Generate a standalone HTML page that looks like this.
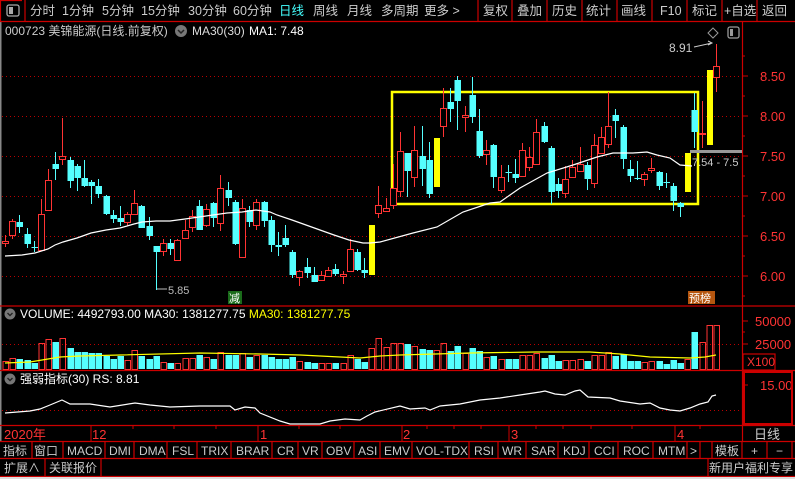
<!DOCTYPE html>
<html><head><meta charset="utf-8">
<style>
html,body{margin:0;padding:0;background:#000;width:795px;height:479px;overflow:hidden}
svg{display:block}
text{font-family:"Liberation Sans","Noto Sans CJK SC",sans-serif}
</style></head>
<body>
<svg id="s" width="795" height="479" viewBox="0 0 795 479" xmlns="http://www.w3.org/2000/svg">
<rect width="795" height="479" fill="#000"/>
<rect x="0" y="22" width="1.5" height="420" fill="#888"/>
<!-- toolbar -->
<g fill="#ccc" font-size="12.5">
<text x="30" y="15">分时</text><text x="62" y="15">1分钟</text><text x="102" y="15">5分钟</text><text x="141" y="15">15分钟</text><text x="188" y="15">30分钟</text><text x="233" y="15">60分钟</text><text x="279" y="15" fill="#4ff">日线</text><text x="313" y="15">周线</text><text x="347" y="15">月线</text><text x="381" y="15">多周期</text><text x="424" y="15">更多 &gt;</text>
<text x="483" y="15">复权</text><text x="517" y="15">叠加</text><text x="552" y="15">历史</text><text x="586" y="15">统计</text><text x="621" y="15">画线</text><text x="660" y="15">F10</text><text x="692" y="15">标记</text><text x="724" y="15">+自选</text><text x="762" y="15">返回</text>
</g>
<rect x="7" y="5" width="12" height="11" rx="2" fill="none" stroke="#aaa" stroke-width="1.3"/><rect x="9" y="7" width="4" height="7" fill="#aaa"/>
<g stroke="#c00" stroke-width="1.2">
<line x1="0" y1="21.5" x2="795" y2="21.5"/><line x1="0" y1="0.5" x2="22" y2="0.5"/>
<line x1="0.5" y1="0" x2="0.5" y2="21"/><line x1="25" y1="0" x2="25" y2="21"/>
<line x1="478" y1="0" x2="478" y2="21"/><line x1="512" y1="0" x2="512" y2="21"/><line x1="547" y1="0" x2="547" y2="21"/><line x1="582" y1="0" x2="582" y2="21"/><line x1="617" y1="0" x2="617" y2="21"/><line x1="652" y1="0" x2="652" y2="21"/><line x1="687" y1="0" x2="687" y2="21"/><line x1="722" y1="0" x2="722" y2="21"/><line x1="757" y1="0" x2="757" y2="21"/>
</g>
<!-- info line -->
<text x="5" y="35" font-size="12" fill="#ccc">000723 美锦能源(日线.前复权)</text>
<circle cx="181" cy="31" r="6" fill="#777"/><path d="M178 30l3 3 3-3" stroke="#222" stroke-width="1.5" fill="none"/>
<text x="192" y="35" font-size="12" fill="#ddd">MA30(30)</text><text x="249" y="35" font-size="12" fill="#fff">MA1: 7.48</text>
<path d="M713 28l5 5-5 5-5-5z" fill="none" stroke="#999"/>
<rect x="728" y="27" width="11" height="11" rx="2" fill="none" stroke="#999" stroke-width="1.3"/><rect x="730" y="29" width="3" height="7" fill="#999"/>
<!-- grid -->
<g stroke="#b00" stroke-dasharray="1,3" stroke-width="1">
<line x1="2" y1="76.5" x2="742" y2="76.5"/><line x1="2" y1="116.5" x2="742" y2="116.5"/><line x1="2" y1="156.5" x2="742" y2="156.5"/><line x1="2" y1="196.5" x2="742" y2="196.5"/><line x1="2" y1="236.5" x2="742" y2="236.5"/><line x1="2" y1="276.5" x2="742" y2="276.5"/>
<line x1="2" y1="344.5" x2="742" y2="344.5"/><line x1="2" y1="410.5" x2="742" y2="410.5"/>
</g>
<g fill="#f33" font-size="13">
<text x="760" y="81">8.50</text><text x="760" y="121">8.00</text><text x="760" y="161">7.50</text><text x="760" y="201">7.00</text><text x="760" y="241">6.50</text><text x="760" y="281">6.00</text>
<text x="755" y="326">50000</text><text x="755" y="349">25000</text><text x="760" y="390">15.00</text>
</g>
<text x="747" y="366" font-size="12" fill="#f33">X100</text>
<g id="g"></g>
<!-- panel lines -->
<g stroke="#c00" stroke-width="1.2" fill="none">
<line x1="742.5" y1="22" x2="742.5" y2="441"/>
<line x1="0" y1="306" x2="795" y2="306"/>
<line x1="0" y1="370.5" x2="795" y2="370.5"/>
<line x1="0" y1="425.5" x2="795" y2="425.5"/>
<line x1="0" y1="441.5" x2="795" y2="441.5"/>
<line x1="0" y1="458.5" x2="795" y2="458.5"/>
<line x1="0" y1="476.5" x2="795" y2="476.5"/>
<rect x="743" y="354" width="32" height="16"/>
<rect x="744" y="372" width="48" height="52" stroke-width="2"/>
</g>
<rect x="0" y="477" width="795" height="2" fill="#ddd"/>
<g stroke="#c00" stroke-width="1">
<path d="M742 76h6M742 116h6M742 156h6M742 196h6M742 236h6M742 276h6M742 96h3M742 136h3M742 176h3M742 216h3M742 256h3M742 296h3M742 56h3M742 321h6M742 344h6M742 332h3M742 385h6"/>
<path d="M91 426v15M258 426v15M402 426v15M509 426v15M675 426v15M133 426v3M174 426v3M216 426v3M299 426v3M340 426v3M427 426v3M454 426v3M481 426v3M536 426v3M563 426v3M591 426v3M632 426v3M700 426v3"/>
</g>
<g fill="#f33" font-size="13">
<text x="4" y="439">2020年</text><text x="92" y="439">12</text><text x="260" y="439">1</text><text x="403" y="439">2</text><text x="511" y="439">3</text><text x="677" y="439">4</text>
</g>
<text x="754" y="439" font-size="13" fill="#ccc">日线</text>
<!-- volume/rs headers -->
<circle cx="10" cy="314" r="5.5" fill="#777"/><path d="M7.5 313l2.5 2.5 2.5-2.5" stroke="#222" stroke-width="1.4" fill="none"/>
<text x="20" y="318" font-size="12" fill="#fff">VOLUME: 4492793.00  MA30: 1381277.75  <tspan fill="#ff0">MA30: 1381277.75</tspan></text>
<circle cx="10" cy="379" r="5.5" fill="#777"/><path d="M7.5 378l2.5 2.5 2.5-2.5" stroke="#222" stroke-width="1.4" fill="none"/>
<text x="20" y="383" font-size="12" fill="#fff">强弱指标(30)  RS: 8.81</text>
<!-- labels -->
<rect x="228" y="291" width="14" height="13" fill="#1a6b1a"/><text x="229" y="302" font-size="11" fill="#fff">减</text>
<rect x="688" y="291" width="27" height="13" fill="#b5560f"/><text x="689" y="302" font-size="11" fill="#fff">预榜</text>
<text x="168" y="294" font-size="11" fill="#bbb">5.85</text><path d="M157 289h10" stroke="#bbb"/>
<text x="669" y="52" font-size="12" fill="#ccc">8.91</text><path d="M694 47l18-4M708 41l4 2-4 2" stroke="#ccc" fill="none"/>
<rect x="690" y="150" width="52" height="3" fill="#999"/>
<text x="692" y="166" font-size="11" fill="#ccc">7.54 - 7.5</text>
<!-- tabs -->
<g fill="#ccc" font-size="12">
<text x="3" y="455">指标</text><text x="34" y="455">窗口</text><text x="67" y="455">MACD</text><text x="109" y="455">DMI</text><text x="139" y="455">DMA</text><text x="172" y="455">FSL</text><text x="201" y="455">TRIX</text><text x="236" y="455">BRAR</text><text x="277" y="455">CR</text><text x="302" y="455">VR</text><text x="326" y="455">OBV</text><text x="358" y="455">ASI</text><text x="384" y="455">EMV</text><text x="416" y="455">VOL-TDX</text><text x="474" y="455">RSI</text><text x="502" y="455">WR</text><text x="531" y="455">SAR</text><text x="563" y="455">KDJ</text><text x="594" y="455">CCI</text><text x="623" y="455">ROC</text><text x="658" y="455">MTM</text><text x="690" y="455">&gt;</text><text x="715" y="455">模板</text><text x="751" y="455">+</text><text x="776" y="455">−</text>
<text x="4" y="472">扩展∧</text><text x="49" y="472">关联报价</text><text x="709" y="472">新用户福利专享</text>
</g>
<g stroke="#c00" stroke-width="1.2"><path d="M32 441v17M63 441v17M105 441v17M134 441v17M167 441v17M197 441v17M231 441v17M272 441v17M298 441v17M322 441v17M354 441v17M380 441v17M412 441v17M469 441v17M498 441v17M526 441v17M558 441v17M589 441v17M618 441v17M653 441v17M687 441v17M700 441v17M712 441v17M742 441v17M767 441v17M792 441v17M45 459v18M101 459v18M708 459v18"/></g>
</svg>
<script>
var C=[["r",241,243,235,247],["r",221,235,219,239],["c",222,227,215,233],["c",234,244,228,248],["c",247,248,241,252],["r",214,250,199,251],["r",180,210,169,211],["c",164,169,152,180],["r",156,159,118,165],["c",160,181,157,188],["c",166,178,164,191],["c",178,186,160,187],["c",182,186,180,204],["c",186,194,179,198],["c",196,214,195,215],["c",215,219,210,223],["c",218,222,206,226],["r",214,222,212,226],["r",203,214,190,215],["c",206,228,205,228],["c",226,236,217,240],["c",246,252,246,290],["r",243,251,239,256],["c",243,249,239,255],["r",240,260,239,261],["r",230,238,220,238],["r",216,227,210,232],["c",206,230,200,230],["r",209,225,204,227],["c",203,218,202,227],["r",188,223,175,231],["c",190,198,182,206],["c",202,244,200,245],["r",208,257,199,257],["c",210,222,206,227],["r",202,225,199,230],["c",202,221,201,227],["c",220,245,216,252],["c",245,247,232,256],["c",238,245,225,247],["c",252,275,250,278],["r",271,277,270,286],["c",267,273,258,278],["c",275,282,267,282],["r",275,280,271,281],["r",270,276,267,277],["c",269,274,264,276],["r",274,276,271,284],["r",249,271,239,271],["c",252,270,249,271],["c",270,273,258,278],["y",225,275,225,275],
["r",205,213,186,218],["r",208,211,198,212],["r",188,205,164,209],["r",151,191,132,197],["c",153,171,153,197],["r",150,177,126,187],["c",156,169,126,186],["c",160,194,142,198],["y",138,187,138,190],["r",108,126,88,137],["c",102,109,88,122],["c",80,101,76,130],["r",115,117,106,132],["c",95,117,77,123],["c",131,156,109,158],["r",150,154,140,165],["c",145,177,144,188],["r",177,190,165,193],["c",172,173,165,182],["c",174,178,159,183],["r",150,176,143,176],["r",157,167,147,171],["r",132,164,119,165],["c",126,142,122,143],["c",148,192,146,204],["c",184,191,178,198],["r",179,193,166,198],["r",167,177,160,177],["r",164,171,147,172],["c",165,179,162,190],["r",145,183,134,188],["r",137,153,127,153],["r",126,144,92,148],["c",115,121,109,138],["c",127,159,125,169],["c",169,176,160,182],["c",178,179,161,180],["r",174,179,172,186],["r",168,170,158,173],["c",172,186,171,190],["c",182,183,173,188],["c",186,201,183,211],["c",203,207,202,217],["y",153,192,153,197],["c",110,132,93,148],["r",133,134,101,148],["y",70,145,70,145],["r",66,77,44,92]];
var V=[361,358,359,360,363,343,339,342,338,348,352,352,353,353,356,359,356,360,350,356,359,356,362,363,363,358,358,355,357,359,352,355,355,353,357,355,355,357,359,359,357,361,362,363,363,363,363,363,355,359,362,348,338,347,343,343,344,346,349,350,350,343,351,346,353,348,351,357,356,359,359,359,355,355,353,358,355,361,360,360,359,361,355,355,352,356,354,361,361,362,361,361,364,360,363,359,332,342,325,325];
var h="",n=C.length;
function X(i){return 5+i*(711/(n-1));}
h+='<rect x="392" y="92" width="306" height="112" fill="none" stroke="#ff0" stroke-width="2.5"/>';
for(var i=0;i<n;i++){var c=C[i],x=Math.round(X(i));
 if(c[0]=="y"){h+='<rect x="'+(x-2)+'" y="'+c[1]+'" width="6" height="'+(c[2]-c[1])+'" fill="#ff0"/>';continue;}
 var col=c[0]=="r"?"#f33":"#5ff";
 h+='<line x1="'+(x+0.5)+'" y1="'+c[3]+'" x2="'+(x+0.5)+'" y2="'+c[4]+'" stroke="'+col+'"/>';
 var hh=Math.max(1,c[2]-c[1]);
 if(c[0]=="r")h+='<rect x="'+(x-2.5)+'" y="'+(c[1]+0.5)+'" width="6" height="'+hh+'" fill="#000" stroke="'+col+'"/>';
 else h+='<rect x="'+(x-2.5)+'" y="'+c[1]+'" width="6.5" height="'+hh+'" fill="'+col+'"/>';
}
for(var i=0;i<V.length;i++){var x=Math.round(X(i)),c=C[i][0];
 if(c=="c")h+='<rect x="'+(x-2.5)+'" y="'+V[i]+'" width="6.5" height="'+(369-V[i])+'" fill="#5ff"/>';
 else h+='<rect x="'+(x-2)+'" y="'+(V[i]+0.5)+'" width="5.5" height="'+(369-V[i])+'" fill="none" stroke="#f33"/>';}
h+='<polyline fill="none" stroke="#fff" stroke-width="1.2" points="5,256 22,255 35,253 48,249 55,245 63,242 77,238 91,233 106,230 120,228 134,224 142,222 156,221 170,221 185,219 199,217 213,215 227,213 242,212 256,210 270,212 277,215 292,220 306,225 320,230 334,235 349,240 363,243 370,243 380,242 413,233 437,227 463,212 490,203 500,202 520,188 547,173 573,165 597,157 613,153 633,153 647,152 657,155 670,158 680,165 692,166"/>';
h+='<polyline fill="none" stroke="#ff0" stroke-width="1.2" points="5,363 30,362 60,357 80,356 120,355 200,353 260,354 300,355 340,357 360,358 380,356 400,355 470,353 535,352 590,352 620,354 650,357 690,358 705,357 716,355"/>';
h+='<polyline fill="none" stroke="#fff" stroke-width="1.2" points="5,413 30,411 40,409 50,405 62,400 70,404 90,404 110,407 135,403 150,405 170,407 200,406 230,406 235,410 245,407 255,408 260,413 280,421 290,424 320,424 330,421 345,419 360,420 367,416 375,412 400,406 410,409 425,408 430,410 440,406 460,404 480,400 500,398 520,395 540,392 545,391 555,394 565,395 575,391 580,390 588,397 610,398 620,401 640,404 650,403 660,408 670,410 680,411 690,408 700,404 708,402 712,396 716,395"/>';
document.getElementById("g").innerHTML=h;
</script>
</body></html>
